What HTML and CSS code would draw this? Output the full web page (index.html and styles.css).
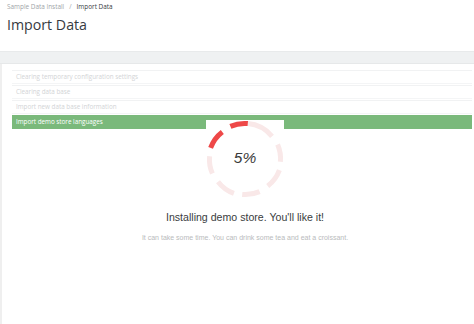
FILE: index.html
```html
<!DOCTYPE html>
<html>
<head>
<meta charset="utf-8">
<link rel="stylesheet" href="styles.css">
</head>
<body>
<div class="header">
  <div class="crumbs"><span class="crumb-link">Sample Data Install</span><span class="crumb-sep">/</span><span class="crumb-current">Import Data</span></div>
  <h1 class="title">Import Data</h1>
</div>
<div class="band"></div>
<div class="panel">
  <ul class="steps">
    <li class="step">Clearing temporary configuration settings</li>
    <li class="step">Clearing data base</li>
    <li class="step">Import new data base information</li>
    <li class="step step-active">Import demo store languages</li>
  </ul>
  <div class="progress">
    <div class="spinner">
      <svg class="ring" width="78" height="78" viewBox="0 0 78 78">
        <g fill="none" stroke-width="5">
          <path class="seg" d="M 41.8 3.6 A 35.5 35.5 0 0 1 66.0 16.3"/>
          <path class="seg" d="M 71.6 24.4 A 35.5 35.5 0 0 1 74.4 41.8"/>
          <path class="seg" d="M 73.4 50.1 A 35.5 35.5 0 0 1 61.7 66.0"/>
          <path class="seg" d="M 53.6 71.6 A 35.5 35.5 0 0 1 36.2 74.4"/>
          <path class="seg" d="M 27.9 73.4 A 35.5 35.5 0 0 1 12.0 61.7"/>
          <path class="seg" d="M 6.4 53.6 A 35.5 35.5 0 0 1 3.6 36.2"/>
          <path class="seg seg-on" d="M 4.6 27.9 A 35.5 35.5 0 0 1 16.3 12.0"/>
          <path class="seg seg-on" d="M 24.4 6.4 A 35.5 35.5 0 0 1 41.8 3.6"/>
        </g>
      </svg>
      <span class="percent">5%</span>
    </div>
    <p class="msg">Installing demo store. You'll like it!</p>
    <p class="note">It can take some time. You can drink some tea and eat a croissant.</p>
  </div>
</div>
</body>
</html>
```
FILE: styles.css
```css
html, body {
  margin: 0;
  padding: 0;
  background: #ffffff;
}
body {
  font-family: "Open Sans", "Liberation Sans", sans-serif;
  width: 474px;
  height: 324px;
  overflow: hidden;
}
.header {
  padding: 2px 7px 0 7px;
  height: 51px;
  box-sizing: border-box;
}
.crumbs {
  font-size: 6.4px;
  line-height: 10px;
  color: #a0a4a8;
}
.crumb-sep {
  margin: 0 5px;
}
.crumb-current {
  color: #363a41;
}
.title {
  margin: 3px 0 0 0;
  font-size: 14.2px;
  line-height: 20px;
  font-weight: 400;
  color: #363a41;
}
.band {
  height: 11px;
  background: #eff1f2;
  border-top: 1px solid #e8eaeb;
  border-bottom: 1px solid #e6e8e9;
}
.panel {
  border-left: 2px solid #efefef;
  padding: 6px 2px 0 10px;
  height: 260px;
}
.steps {
  list-style: none;
  margin: 0;
  padding: 0;
}
.step {
  height: 12px;
  line-height: 12px;
  margin-bottom: 1px;
  padding-left: 4px;
  font-size: 6.3px;
  color: #d2d4d6;
  border-top: 1px solid #f1f2f3;
  border-bottom: 1px solid #f4f5f6;
}
.step-active {
  background: #7ab97b;
  color: #ffffff;
  border-color: #7ab97b;
}
.progress {
  display: flex;
  flex-direction: column;
  align-items: center;
  margin-top: -10px;
}
.spinner {
  position: relative;
  width: 78px;
  height: 78px;
  background: #ffffff;
  margin-left: 6px;
}
.ring {
  display: block;
}
.seg {
  stroke: #f9e8e8;
}
.seg-on {
  stroke: #ee4848;
}
.percent {
  position: absolute;
  left: 0;
  right: 0;
  top: 29px;
  text-align: center;
  font-family: "Liberation Sans", Arial, sans-serif;
  font-style: italic;
  font-size: 15.5px;
  line-height: 18px;
  color: #3a3a3a;
}
.msg {
  margin: 13px 0 0 6px;
  font-family: "Liberation Sans", Arial, sans-serif;
  font-size: 10.6px;
  line-height: 13px;
  color: #3a3d40;
}
.note {
  margin: 9px 0 0 6px;
  font-family: "Liberation Sans", Arial, sans-serif;
  font-size: 7px;
  line-height: 9px;
  color: #b9bbbd;
}
```
